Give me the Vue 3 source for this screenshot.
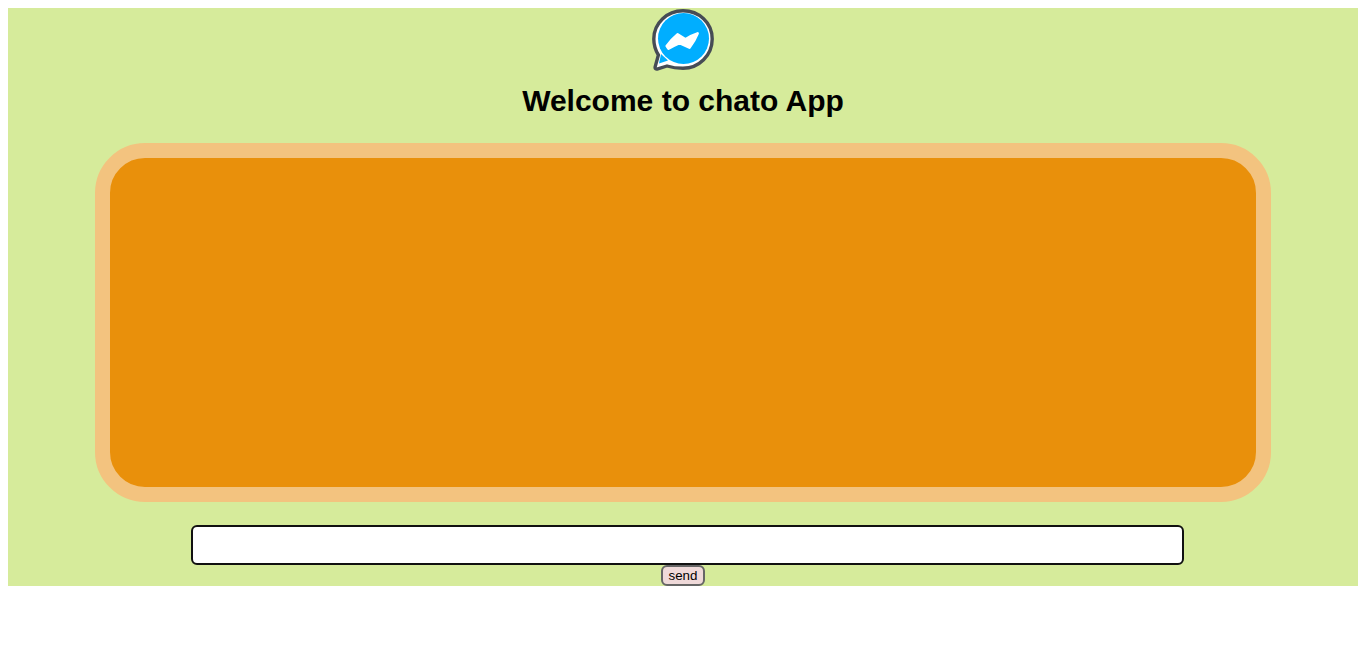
<template>
  <div class="page">
    <div class="app">
      <svg class="logo" viewBox="0 0 62 62" width="62" height="62" aria-hidden="true">
        <path
          d="M31 1.800C15 1.800 1.800 14.200 1.800 30c0 6 1.900 11.600 4.600 16L3.200 57.600c-.5 2 .7 2.900 2.600 2.300L15 57c4.800 1.500 10.600 2.300 16 2.300 16 0 29.200-13 29.200-29.300S47 1.800 31 1.800z"
          fill="#fff"
          stroke="#464c55"
          stroke-width="3.400"
          stroke-linejoin="round"
        />
        <circle cx="31.500" cy="29.500" r="25.500" fill="#00aeff" />
        <path d="M9 45l-2 9.500 9-3z" fill="#00aeff" />
        <path
          d="M14.800 37Q20 30 25.500 25.500L33.500 30.500Q39 26.500 45.500 24.500Q42.500 32 37.500 38.500L27.500 34Q22 36.500 16.500 39.500z"
          fill="#fff"
          stroke="#fff"
          stroke-width="2.800"
          stroke-linejoin="round"
        />
      </svg>
      <h1 class="title">Welcome to chato App</h1>
      <div class="chat-box"></div>
      <input class="msg-input" type="text" />
      <button class="send-btn">send</button>
    </div>
  </div>
</template>

<script setup>
</script>

<style scoped>
.page {
  padding: 8px;
  font-family: "Liberation Sans", Arial, sans-serif;
}

.app {
  height: 578px;
  background-color: #d6eb9b;
  display: flex;
  flex-direction: column;
  align-items: center;
}

.logo {
  display: block;
  margin-top: 1px;
  flex-shrink: 0;
}

.title {
  margin: 12px 0 0;
  font-size: 30px;
  line-height: 35px;
  font-weight: bold;
  color: #000;
}

.chat-box {
  box-sizing: border-box;
  width: 1176px;
  height: 359px;
  margin-top: 25px;
  background-color: #e9900b;
  border: 15px solid #f3c37f;
  border-radius: 50px;
  flex-shrink: 0;
}

.msg-input {
  box-sizing: border-box;
  width: 993px;
  height: 40px;
  margin: 23px 0 0 9px;
  padding: 1px 2px;
  background: #fff;
  border: 2px solid #111;
  border-radius: 6px;
  outline: none;
  flex-shrink: 0;
}

.send-btn {
  box-sizing: border-box;
  width: 44px;
  height: 21px;
  padding: 0;
  background-color: #efd9d9;
  border: 2px solid #666;
  border-radius: 6px;
  font-family: "Liberation Sans", Arial, sans-serif;
  font-size: 13.33px;
  line-height: 17px;
  color: #000;
  flex-shrink: 0;
}
</style>
